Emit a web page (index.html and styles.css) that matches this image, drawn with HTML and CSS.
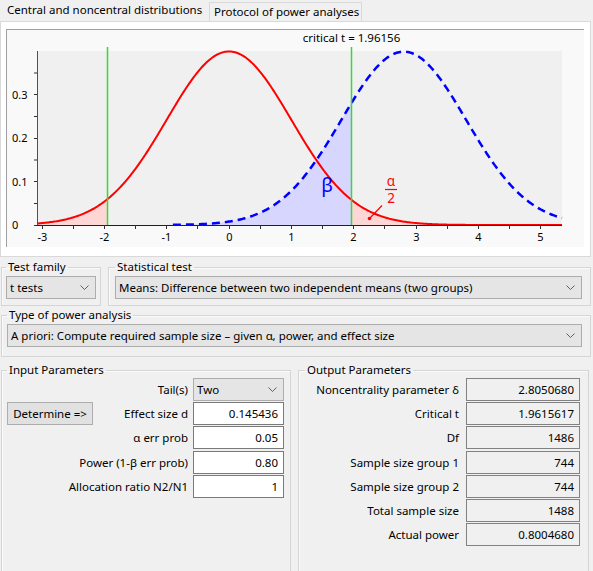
FILE: index.html
```html
<!DOCTYPE html>
<html>
<head>
<meta charset="utf-8">
<title>G*Power</title>
<link rel="stylesheet" href="styles.css">
</head>
<body>
<div class="tabs">
  <div class="tab-active">Central and noncentral distributions</div>
  <div class="tab-inactive">Protocol of power analyses</div>
</div>
<div class="panel">
  <div class="frame">
    <svg class="chart" width="577" height="217" viewBox="7 30 577 217">
      <rect class="plot-bg" x="37" y="51" width="525" height="174"/>
      <path id="fillL" class="fill-red" d=""/>
      <path id="fillR" class="fill-red" d=""/>
      <path id="fillB" class="fill-blue" d=""/>
      <path class="y-axis" d="M37.5 51V225.5"/>
      <path class="tick" d="M34 225.5H37M34 203.5H37M34 181.5H37M34 160H37M34 138.5H37M34 116.5H37M34 94.5H37M34 73H37"/>
      <text class="tick-label" x="12" y="229">0</text>
      <text class="tick-label" x="12" y="185.5">0.1</text>
      <text class="tick-label" x="12" y="142">0.2</text>
      <text class="tick-label" x="12" y="98.5">0.3</text>
      <path id="central" class="curve-central" d=""/>
      <path id="noncentral" class="curve-noncentral" d=""/>
      <path class="crit" d="M107.5 47V225M351.5 47V225"/>
      <path class="x-axis" d="M37 225.5H562"/>
      <path class="tick" d="M42.5 225V229M73.5 225V229M104.5 225V229M135.5 225V229M166.5 225V229M197.5 225V229M229.5 225V229M260.5 225V229M291.5 225V229M322.5 225V229M353.5 225V229M384.5 225V229M416.5 225V229M447.5 225V229M478.5 225V229M509.5 225V229M540.5 225V229"/>
      <text class="tick-label mid" x="42.5" y="241">-3</text>
      <text class="tick-label mid" x="104.5" y="241">-2</text>
      <text class="tick-label mid" x="166.5" y="241">-1</text>
      <text class="tick-label mid" x="229.5" y="241">0</text>
      <text class="tick-label mid" x="291.5" y="241">1</text>
      <text class="tick-label mid" x="353.5" y="241">2</text>
      <text class="tick-label mid" x="416.5" y="241">3</text>
      <text class="tick-label mid" x="478.5" y="241">4</text>
      <text class="tick-label mid" x="540.5" y="241">5</text>
      <text class="crit-label" x="351.5" y="42">critical t = 1.96156</text>
      <text class="beta" x="327" y="192">β</text>
      <text class="alpha" x="391" y="186">α</text>
      <path class="alpha-line" d="M385 189.5H397"/>
      <text class="alpha" x="391" y="203">2</text>
      <path class="alpha-line" d="M382 205.5L370 218"/>
      <circle class="alpha-dot" cx="369.5" cy="218.5" r="1.8"/>
    </svg>
  </div>
</div>

<div class="row-top">
  <fieldset class="group g-family">
    <legend>Test family</legend>
    <div class="select"><span>t tests</span><svg class="chev" width="9" height="5" viewBox="0 0 9 5"><polyline points="0.5,0.5 4.5,4.5 8.5,0.5"/></svg></div>
  </fieldset>
  <fieldset class="group g-test">
    <legend>Statistical test</legend>
    <div class="select"><span>Means: Difference between two independent means (two groups)</span><svg class="chev" width="9" height="5" viewBox="0 0 9 5"><polyline points="0.5,0.5 4.5,4.5 8.5,0.5"/></svg></div>
  </fieldset>
</div>

<fieldset class="group g-type">
  <legend>Type of power analysis</legend>
  <div class="select"><span>A priori: Compute required sample size – given α, power, and effect size</span><svg class="chev" width="9" height="5" viewBox="0 0 9 5"><polyline points="0.5,0.5 4.5,4.5 8.5,0.5"/></svg></div>
</fieldset>

<div class="params">
  <fieldset class="group g-input">
    <legend>Input Parameters</legend>
    <div class="in-grid">
      <span class="lbl wide">Tail(s)</span>
      <div class="select"><span>Two</span><svg class="chev" width="9" height="5" viewBox="0 0 9 5"><polyline points="0.5,0.5 4.5,4.5 8.5,0.5"/></svg></div>

      <button class="btn" type="button">Determine =&gt;</button>
      <span class="lbl">Effect size d</span>
      <div class="field">0.145436</div>

      <span class="lbl wide">α err prob</span>
      <div class="field">0.05</div>

      <span class="lbl wide">Power (1-β err prob)</span>
      <div class="field">0.80</div>

      <span class="lbl wide">Allocation ratio N2/N1</span>
      <div class="field">1</div>
    </div>
  </fieldset>
  <fieldset class="group g-output">
    <legend>Output Parameters</legend>
    <div class="out-grid">
      <span class="lbl">Noncentrality parameter δ</span><div class="out">2.8050680</div>
      <span class="lbl">Critical t</span><div class="out">1.9615617</div>
      <span class="lbl">Df</span><div class="out">1486</div>
      <span class="lbl">Sample size group 1</span><div class="out">744</div>
      <span class="lbl">Sample size group 2</span><div class="out">744</div>
      <span class="lbl">Total sample size</span><div class="out">1488</div>
      <span class="lbl">Actual power</span><div class="out">0.8004680</div>
    </div>
  </fieldset>
</div>
<script src="script.js"></script>
</body>
</html>
```

FILE: styles.css
```css
* { box-sizing: border-box; }
html, body { margin: 0; }
body {
  width: 593px;
  height: 571px;
  overflow: hidden;
  background: #f0f0f0;
  font-family: "Noto Sans", "Segoe UI", sans-serif;
  font-size: 11.5px;
  color: #000;
  white-space: nowrap;
}

.tabs { display: flex; height: 21px; }
.tab-active { width: 209px; padding: 2px 0 0 7px; line-height: 16px; }
.tab-inactive {
  margin-top: 2px;
  width: 153px;
  height: 19px;
  padding: 0 4px;
  border: 1px solid #d9d9d9;
  border-bottom: 0;
  line-height: 18px;
  background: #f0f0f0;
}

.panel {
  width: 591px;
  height: 236px;
  border: 1px solid #d9d9d9;
  background: #fff;
  padding: 7px 0 0 5px;
}
.frame {
  width: 578px;
  height: 218px;
  border-top: 1px solid #a0a0a0;
  border-left: 1px solid #a0a0a0;
  background: #f9f9f9;
}
.chart { display: block; }
.plot-bg { fill: #f0f0f0; }
.fill-red { fill: #ffd6d6; }
.fill-blue { fill: #d6d6ff; }
.y-axis { stroke: #505050; stroke-width: 1; fill: none; }
.x-axis { stroke: #3c1414; stroke-width: 1.2; fill: none; }
.tick { stroke: #303030; stroke-width: 1; fill: none; }
.tick-label { font-family: "Noto Sans", sans-serif; font-size: 11px; fill: #000; }
.tick-label.mid { text-anchor: middle; }
.curve-central { fill: none; stroke: #ff0000; stroke-width: 2; }
.curve-noncentral { fill: none; stroke: #0000ff; stroke-width: 2.5; stroke-dasharray: 8 5; }
.crit { stroke: #2ee02e; stroke-width: 1.5; fill: none; }
.crit-label { font-family: "Noto Sans", sans-serif; font-size: 11.5px; text-anchor: middle; fill: #000; }
.beta { font-family: "Noto Sans", sans-serif; font-size: 19px; text-anchor: middle; fill: #0000ff; }
.alpha { font-family: "Noto Sans", sans-serif; font-size: 13.5px; text-anchor: middle; fill: #ff0000; }
.alpha-line { stroke: #ff0000; stroke-width: 1.2; fill: none; }
.alpha-dot { fill: #ff0000; }

.group {
  margin: 0;
  min-width: 0;
  border: 1px solid #d5d5d5;
  box-shadow: inset 1px 1px 0 #fafafa;
}
.group legend { padding: 0 2px; line-height: 14px; }

.row-top { display: flex; gap: 7px; margin: 3px 0 0 1px; }
.g-family { width: 100px; flex: none; padding: 2px 4px 6px 4px; }
.g-test { width: 483px; flex: none; padding: 2px 8px 6px 6px; }
.g-type { width: 590px; margin: 2px 0 0 1px; padding: 2px 8px 9px 5px; }

.select {
  display: flex;
  align-items: center;
  justify-content: space-between;
  height: 23px;
  border: 1px solid #adadad;
  background: #e5e5e5;
  padding: 0 6px 0 3px;
  overflow: hidden;
}
.chev { flex: none; }
.chev polyline { fill: none; stroke: #606060; stroke-width: 1; }

.params { display: flex; gap: 7px; margin: 6px 0 0 1px; }
.g-input { width: 290px; flex: none; height: 220px; padding: 1px 6px 0 5px; }
.g-output { width: 291px; flex: none; height: 220px; padding: 1px 8px 0 6px; }

.in-grid {
  display: grid;
  grid-template-columns: 86px minmax(0, 1fr) 91px;
  grid-auto-rows: 23px;
  column-gap: 5px;
  row-gap: 1.2px;
}
.in-grid .wide { grid-column: 1 / 3; }
.out-grid {
  display: grid;
  grid-template-columns: minmax(0, 1fr) 114px;
  grid-auto-rows: 23px;
  column-gap: 7px;
  row-gap: 1.2px;
}
.lbl { text-align: right; line-height: 23px; }
.field {
  background: #fff;
  border: 1px solid #7a7a7a;
  text-align: right;
  padding-right: 5px;
  line-height: 21px;
}
.out {
  background: #f0f0f0;
  border: 1px solid #828282;
  text-align: right;
  padding-right: 5px;
  line-height: 21px;
}
.btn {
  height: 23px;
  margin: 0;
  padding: 0;
  border: 1px solid #adadad;
  background: #e1e1e1;
  font: inherit;
  color: #000;
  text-align: center;
}
```

FILE: script.js
```js
(function () {
  var X0 = 229, SX = 62.3, Y0 = 225, SY = 435, S2 = Math.sqrt(2 * Math.PI);
  function f(t, m, s) { var u = (t - m) / s; return Math.exp(-u * u / 2) / (s * S2); }
  function pts(a, b, m, s) {
    var r = [], n = Math.ceil((b - a) / 0.02);
    for (var i = 0; i <= n; i++) {
      var t = a + (b - a) * i / n;
      r.push((X0 + t * SX).toFixed(2) + ',' + (Y0 - f(t, m, s) * SY).toFixed(2));
    }
    return r;
  }
  function line(id, a, b, m, s) {
    document.getElementById(id).setAttribute('d', 'M' + pts(a, b, m, s).join('L'));
  }
  function area(id, a, b, m, s) {
    var p = pts(a, b, m, s);
    document.getElementById(id).setAttribute('d',
      'M' + (X0 + a * SX).toFixed(2) + ',' + Y0 + 'L' + p.join('L') + 'L' + (X0 + b * SX).toFixed(2) + ',' + Y0 + 'Z');
  }
  var A = -3.082, B = 5.345, C = 1.96156, D = 2.805068, SD = 1.0013;
  area('fillL', A, -C, 0, 1);
  area('fillR', C, B, 0, 1);
  area('fillB', -1.0, C, D, SD);
  line('central', A, B, 0, 1);
  line('noncentral', -0.9, B, D, SD);
})();
```
